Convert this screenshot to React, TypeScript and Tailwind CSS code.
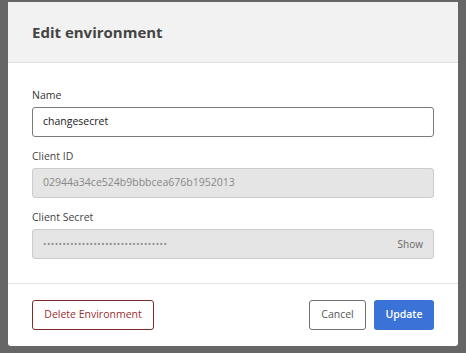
export default function App() {
  return (
    <div
      className="w-[466px] h-[353px] bg-[#666666] pt-[2px] px-[8px] overflow-hidden"
      style={{ fontFamily: '"Open Sans", "Liberation Sans", sans-serif' }}
    >
      <div className="w-[450px] h-[344px] bg-white rounded-b-[3px] flex flex-col">
        <div className="h-[61px] bg-[#f2f2f2] border-b border-[#e0e0e0] flex items-center px-6">
          <h2 className="text-[15px] font-bold text-[#444444]">Edit environment</h2>
        </div>

        <div className="px-6 pt-[24px] pb-[24px] border-b border-[#e6e6e6] flex flex-col">
          <label className="text-[10.5px] leading-4 text-[#333333] mb-1">Name</label>
          <div className="h-[30px] border border-[#7a7a7a] rounded-[3px] flex items-center px-[10px] text-[10.5px] text-[#222222]">
            changesecret
          </div>

          <label className="text-[10.5px] leading-4 text-[#444444] mt-[11px] mb-1">Client ID</label>
          <div className="h-[30px] border border-[#cccccc] bg-[#e5e5e5] rounded-[3px] flex items-center px-[10px] text-[10.5px] text-[#888888]">
            02944a34ce524b9bbbcea676b1952013
          </div>

          <label className="text-[10.5px] leading-4 text-[#444444] mt-[11px] mb-1">Client Secret</label>
          <div className="h-[30px] border border-[#cccccc] bg-[#e5e5e5] rounded-[3px] flex items-center justify-between px-[10px] text-[#888888]">
            <span className="text-[9px] tracking-[0.5px]">••••••••••••••••••••••••••••••••</span>
            <span className="text-[10px] text-[#666666]">Show</span>
          </div>
        </div>

        <div className="flex-1 flex items-center justify-between px-6">
          <button className="h-[30px] w-[122px] border border-[#7b2b2b] rounded-[3px] text-[10.5px] text-[#9a3030]">
            Delete Environment
          </button>
          <div className="flex gap-2">
            <button className="h-[30px] w-[57px] border border-[#6f6f6f] rounded-[3px] text-[10.5px] text-[#555555]">
              Cancel
            </button>
            <button className="h-[30px] w-[60px] bg-[#3b72d8] rounded-[3px] text-[10.5px] font-semibold text-white">
              Update
            </button>
          </div>
        </div>
      </div>
    </div>
  );
}
